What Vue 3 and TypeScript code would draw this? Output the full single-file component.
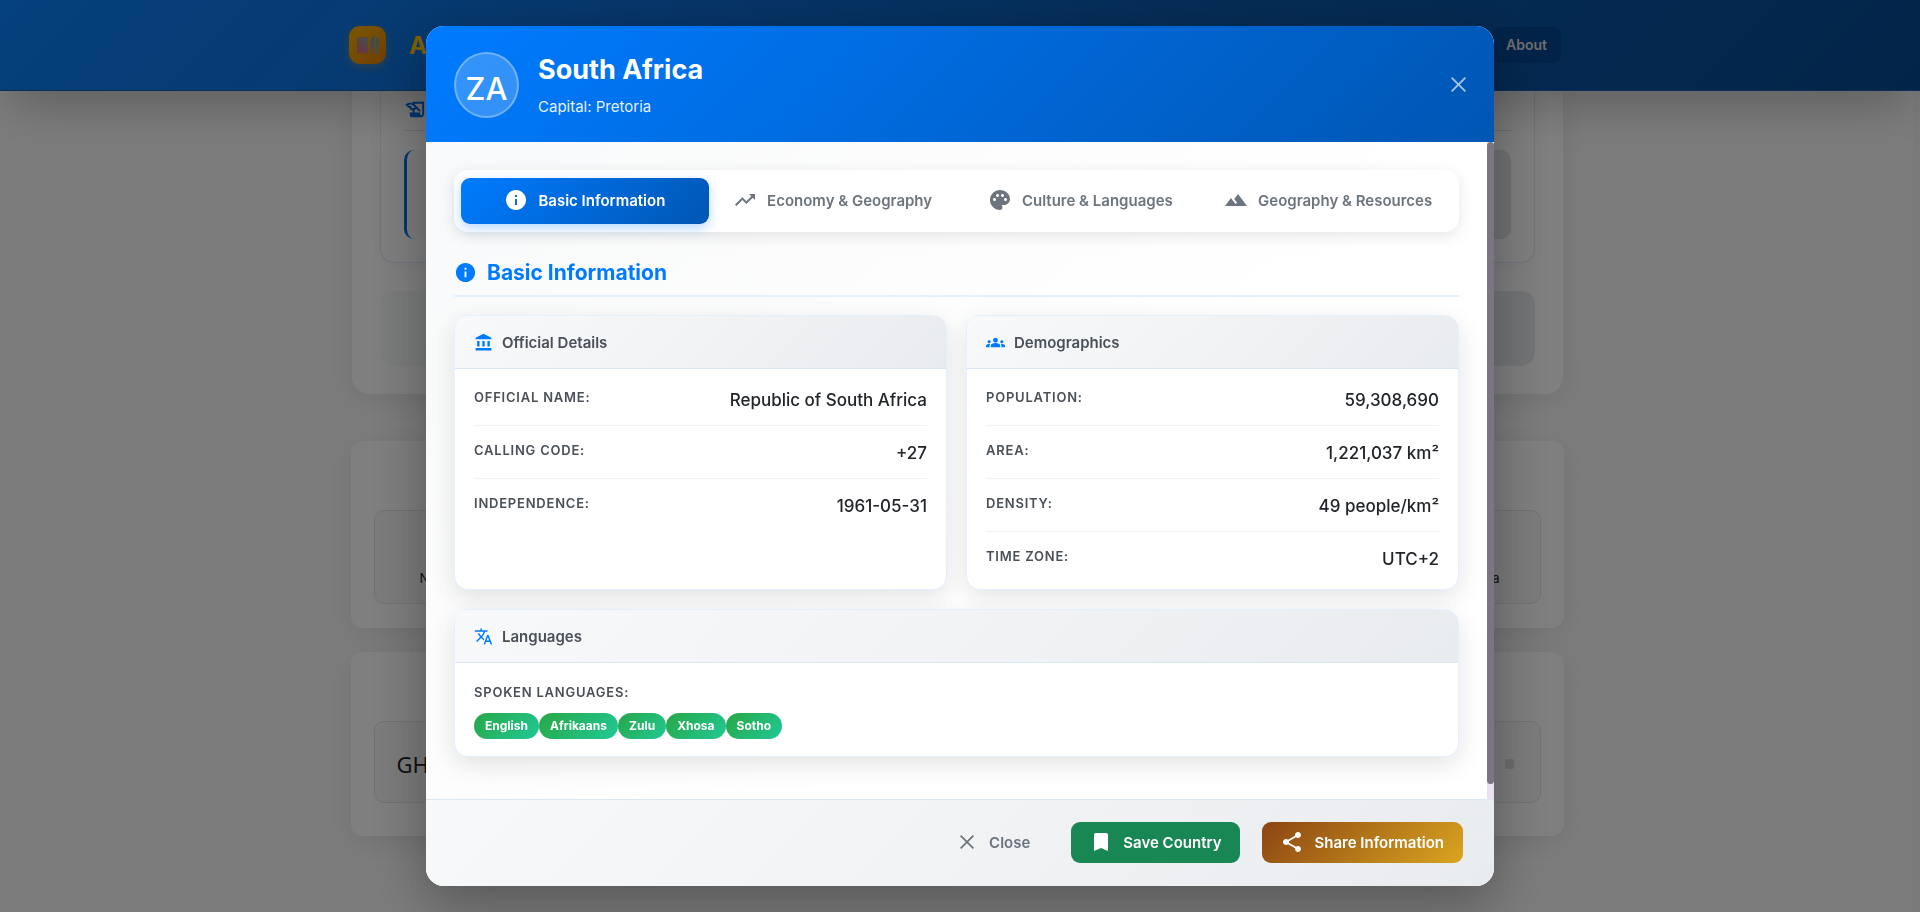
<script setup lang="ts">
import { ref } from 'vue'

interface Tab { id: string; label: string; icon: string }
interface Fact { label: string; value: string }
interface Panel { title: string; icon: string; facts: Fact[] }

const icons: Record<string, string> = {
  info: 'M12 2C6.48 2 2 6.48 2 12s4.48 10 10 10 10-4.48 10-10S17.52 2 12 2zm1 15h-2v-6h2v6zm0-8h-2V7h2v2z',
  trend: 'M16 6l2.29 2.29-4.88 4.88-4-4L2 16.59 3.41 18l6-6 4 4 6.3-6.29L22 12V6z',
  palette: 'M12 2C6.49 2 2 6.49 2 12s4.49 10 10 10c1.38 0 2.5-1.12 2.5-2.5 0-.61-.23-1.2-.64-1.67-.08-.1-.13-.21-.13-.33 0-.28.22-.5.5-.5H16c3.31 0 6-2.69 6-6 0-4.96-4.49-9-10-9zm5.5 11c-.83 0-1.5-.67-1.5-1.5s.67-1.5 1.5-1.5 1.5.67 1.5 1.5-.67 1.5-1.5 1.5zm-3-4c-.83 0-1.5-.67-1.5-1.5S13.67 6 14.5 6s1.5.67 1.5 1.5S15.33 9 14.5 9zM5 11.5c0-.83.67-1.5 1.5-1.5s1.5.67 1.5 1.5S7.33 13 6.5 13 5 12.33 5 11.5zm6-4c0 .83-.67 1.5-1.5 1.5S8 8.33 8 7.5 8.67 6 9.5 6s1.5.67 1.5 1.5z',
  terrain: 'M14 6l-3.75 5 2.85 3.8-1.6 1.2C9.81 13.75 7 10 7 10l-6 8h22L14 6z',
  bank: 'M4 10h3v7H4zM10.500 10h3v7h-3zM2 19h20v3H2zM17 10h3v7h-3zM12 1L2 6v2h20V6z',
  groups: 'M12 12.750c1.630 0 3.070.390 4.240.900 1.080.480 1.760 1.560 1.760 2.730V18H6v-1.610c0-1.180.680-2.260 1.760-2.730 1.170-.520 2.610-.910 4.240-.910zM4 13c1.100 0 2-.900 2-2s-.900-2-2-2-2 .900-2 2 .900 2 2 2zm1.130 1.100c-.370-.060-.740-.100-1.130-.100-.990 0-1.930.210-2.780.580C.480 14.900 0 15.620 0 16.430V18h4.500v-1.610c0-.830.230-1.610.630-2.290zM20 13c1.100 0 2-.900 2-2s-.900-2-2-2-2 .900-2 2 .900 2 2 2zm4 3.430c0-.810-.480-1.530-1.220-1.850-.850-.370-1.790-.580-2.780-.580-.390 0-.760.040-1.130.100.400.680.630 1.460.630 2.290V18H24v-1.570zM12 6c1.660 0 3 1.340 3 3s-1.340 3-3 3-3-1.340-3-3 1.340-3 3-3z',
  translate: 'M12.870 15.070l-2.540-2.510.030-.030c1.740-1.940 2.980-4.170 3.710-6.530H17V4h-7V2H8v2H1v1.990h11.170C11.500 7.920 10.440 9.750 9 11.350 8.070 10.320 7.300 9.190 6.690 8h-2c.730 1.630 1.730 3.170 2.980 4.560l-5.090 5.020L4 19l5-5 3.110 3.110.760-2.040zM18.500 10h-2L12 22h2l1.120-3h4.750L21 22h2l-4.500-12zm-2.620 7l1.620-4.330L19.120 17h-3.240z',
  close: 'M19 6.200L17.800 5 12 10.800 6.200 5 5 6.200 10.800 12 5 17.800 6.200 19 12 13.200 17.800 19 19 17.800 13.200 12z',
  bookmark: 'M17 3H7c-1.100 0-2 .900-2 2v16l7-3 7 3V5c0-1.100-.900-2-2-2z',
  share: 'M18 16.080c-.760 0-1.440.300-1.960.770L8.910 12.700c.050-.230.090-.460.090-.700s-.040-.470-.090-.700l7.050-4.110c.540.500 1.250.810 2.040.810 1.660 0 3-1.340 3-3s-1.340-3-3-3-3 1.340-3 3c0 .240.040.470.090.700L8.040 9.810C7.500 9.310 6.790 9 6 9c-1.660 0-3 1.340-3 3s1.340 3 3 3c.790 0 1.500-.310 2.040-.810l7.120 4.160c-.050.210-.080.430-.080.650 0 1.610 1.310 2.920 2.920 2.920s2.920-1.310 2.920-2.920-1.310-2.920-2.920-2.920z',
  history: 'M9 4v1.380c-.83-.33-1.720-.5-2.610-.5-1.790 0-3.580.68-4.950 2.050l3.330 3.330h1.110v1.110c.86.86 1.980 1.310 3.110 1.360V15H6v3c0 1.100.900 2 2 2h10c1.660 0 3-1.340 3-3V4H9zm-1.110 6.410V8.260H5.610L4.570 7.220a5.070 5.070 0 0 1 1.820-.34c1.340 0 2.590.52 3.540 1.460l1.410 1.410-.2.2a2.700 2.700 0 0 1-1.920.8c-.47 0-.93-.12-1.330-.34zM19 17c0 .55-.45 1-1 1s-1-.45-1-1v-2h-6v-2.590c.57-.23 1.100-.57 1.560-1.030l.2-.2L15.590 14H17v-1.410l-6-5.970V6h8v11z',
}

const tabs: Tab[] = [
  { id: 'basic', label: 'Basic Information', icon: 'info' },
  { id: 'economy', label: 'Economy & Geography', icon: 'trend' },
  { id: 'culture', label: 'Culture & Languages', icon: 'palette' },
  { id: 'resources', label: 'Geography & Resources', icon: 'terrain' },
]
const active = ref('basic')

const panels: Panel[] = [
  {
    title: 'Official Details',
    icon: 'bank',
    facts: [
      { label: 'Official Name:', value: 'Republic of South Africa' },
      { label: 'Calling Code:', value: '+27' },
      { label: 'Independence:', value: '1961-05-31' },
    ],
  },
  {
    title: 'Demographics',
    icon: 'groups',
    facts: [
      { label: 'Population:', value: '59,308,690' },
      { label: 'Area:', value: '1,221,037 km²' },
      { label: 'Density:', value: '49 people/km²' },
      { label: 'Time Zone:', value: 'UTC+2' },
    ],
  },
]
const languages = ['English', 'Afrikaans', 'Zulu', 'Xhosa', 'Sotho']
</script>

<template>
  <div class="page">
    <header class="site-header">
      <div class="site-bar">
        <span class="logo">
          <svg viewBox="0 0 24 24" width="24" height="24" aria-hidden="true">
            <defs>
              <linearGradient id="book" x1="0" y1="1" x2="1" y2="0">
                <stop offset="0" stop-color="#e06080" />
                <stop offset="0.5" stop-color="#a09090" />
                <stop offset="1" stop-color="#50a0a0" />
              </linearGradient>
            </defs>
            <path fill="url(#book)" d="M1 5c4-1.500 8-1.500 11 .5v16c-3-2-7-2-11-.5zM14 8l5-7v14l-5 4zM20 5l3 .5V21c-3-1-7-1-10 .5 2-2 4-3 7-3z" />
          </svg>
        </span>
        <strong class="brand">Africa</strong>
        <a class="nav-link" href="#about">About</a>
      </div>
    </header>

    <main class="content">
      <section class="sheet story">
        <div class="story-card">
          <h2 class="story-head">
            <svg viewBox="0 0 24 24" width="23" height="23" aria-hidden="true"><path :d="icons.history" /></svg>
          </h2>
          <p class="quote">South Africa<br />government</p>
        </div>
        <div class="strip"></div>
      </section>
      <section class="sheet">
        <div class="tile tall"><span>Nigeria</span><span>Kenya</span></div>
      </section>
      <section class="sheet last">
        <div class="tile flags"><span>GH</span><i class="mark"></i></div>
      </section>
    </main>
    <div class="page-gutter"></div>

    <div class="overlay">
      <div class="dialog" role="dialog" aria-modal="true" aria-labelledby="dialog-title">
        <header class="dialog-head">
          <span class="avatar">ZA</span>
          <div class="heading">
            <h1 id="dialog-title">South Africa</h1>
            <p>Capital: Pretoria</p>
          </div>
          <button class="dismiss" type="button" aria-label="Close dialog">
            <svg viewBox="5 5 14 14" width="15" height="15" aria-hidden="true"><path :d="icons.close" /></svg>
          </button>
        </header>

        <div class="dialog-body">
          <div class="scroll">
            <div class="tabs" role="tablist">
              <button
                v-for="tab in tabs"
                :key="tab.id"
                type="button"
                role="tab"
                :aria-selected="active === tab.id"
                :class="['tab', { on: active === tab.id }]"
                @click="active = tab.id"
              >
                <svg viewBox="0 0 24 24" width="24" height="24" aria-hidden="true"><path :d="icons[tab.icon]" /></svg>
                {{ tab.label }}
              </button>
            </div>

            <h2 class="section-title">
              <svg viewBox="0 0 24 24" width="23" height="23" aria-hidden="true"><path :d="icons.info" /></svg>
              Basic Information
            </h2>

            <div class="cards">
              <section v-for="panel in panels" :key="panel.title" class="card">
                <h3 class="card-head">
                  <svg viewBox="0 0 24 24" width="19" height="19" aria-hidden="true"><path :d="icons[panel.icon]" /></svg>
                  {{ panel.title }}
                </h3>
                <dl class="facts">
                  <div v-for="fact in panel.facts" :key="fact.label" class="fact">
                    <dt>{{ fact.label }}</dt>
                    <dd>{{ fact.value }}</dd>
                  </div>
                </dl>
              </section>

              <section class="card wide">
                <h3 class="card-head">
                  <svg viewBox="0 0 24 24" width="19" height="19" aria-hidden="true"><path :d="icons.translate" /></svg>
                  Languages
                </h3>
                <div class="spoken">
                  <h4>Spoken Languages:</h4>
                  <ul class="pills">
                    <li v-for="lang in languages" :key="lang">{{ lang }}</li>
                  </ul>
                </div>
              </section>
            </div>
          </div>
          <div class="track"><div class="thumb"></div></div>
        </div>

        <footer class="dialog-foot">
          <button class="btn plain" type="button">
            <svg viewBox="0 0 24 24" width="24" height="24" aria-hidden="true"><path :d="icons.close" /></svg>
            Close
          </button>
          <button class="btn save" type="button">
            <svg viewBox="0 0 24 24" width="24" height="24" aria-hidden="true"><path :d="icons.bookmark" /></svg>
            Save Country
          </button>
          <button class="btn share" type="button">
            <svg viewBox="0 0 24 24" width="24" height="24" aria-hidden="true"><path :d="icons.share" /></svg>
            Share Information
          </button>
        </footer>
      </div>
    </div>
  </div>
</template>

<style>
body {
  background: #f9f9f9;
}
</style>

<style scoped>
.page {
  position: relative;
  height: 100vh;
  overflow: hidden;
  font-family: Inter, "Liberation Sans", sans-serif;
  color: #212529;
  background: #f9f9f9;
}
.page *,
.page *::before {
  box-sizing: border-box;
}
svg {
  display: block;
  flex: none;
  fill: currentColor;
}
h1, h2, h3, h4, p, ul, dl, dd {
  margin: 0;
}
button {
  font-family: inherit;
  border: 0;
  background: none;
  cursor: pointer;
}

/* Site behind the dialog */
.site-header {
  position: relative;
  z-index: 1;
  height: 91px;
  padding-right: 10px;
  border-bottom: 1px solid #1a5fae;
  background: linear-gradient(135deg, #0a82fa 0%, #0d70dc 28%, #0b5aae 60%, #064992 100%);
  box-shadow: 0 24px 48px -12px rgba(0, 0, 0, 0.25);
}
.site-bar {
  display: flex;
  align-items: center;
  max-width: 1212px;
  height: 90px;
  margin: 0 auto;
}
.logo {
  display: grid;
  place-items: center;
  width: 37px;
  height: 38px;
  border-radius: 11px;
  background: linear-gradient(135deg, #f4b000, #e07c00);
  box-shadow: 0 3px 10px rgba(255, 170, 0, 0.3);
}
.brand {
  margin-left: 23px;
  color: #ffc107;
  font-size: 24px;
}
.nav-link {
  margin-left: auto;
  padding: 9px 14px;
  border-radius: 8px;
  background: rgba(0, 50, 120, 0.35);
  color: #dcdcdc;
  font-size: 14px;
  line-height: 18px;
  font-weight: 600;
  text-decoration: none;
}
.content {
  max-width: 1213px;
  margin: 0 auto;
  padding: 0;
  translate: -3px 0;
}
.sheet {
  padding: 69px 23px 24px;
  border-radius: 12px;
  background: #fff;
  box-shadow: 0 6px 28px rgba(0, 15, 10, 0.09);
  margin-bottom: 24px;
}
.story {
  padding: 0 28px 28px;
  border: 1px solid #e6f1fc;
  border-top: 0;
  border-radius: 0 0 18px 18px;
  margin-bottom: 46px;
}
.story-card {
  padding: 0 23px 23px;
  border: 1px solid #dceafa;
  border-top: 0;
  border-radius: 0 0 14px 14px;
  box-shadow: 0 4px 16px rgba(0, 0, 0, 0.04);
}
.story-head {
  height: 40px;
  padding-top: 7px;
  border-bottom: 1px solid #d4e6fa;
  color: #0070ee;
}
.quote {
  height: 89px;
  margin-top: 19px;
  padding: 18px 20px;
  border-left: 3px solid #0070e8;
  border-radius: 10px;
  background: linear-gradient(90deg, #f8f9fa, #e2e5e8);
  color: #7a3d12;
  font-size: 16px;
  line-height: 27px;
}
.strip {
  height: 75px;
  margin-top: 28px;
  border-radius: 14px;
  background: linear-gradient(90deg, #f6f8f9, #e6e9ec);
}
.tile {
  display: flex;
  justify-content: space-between;
  height: 94px;
  padding: 0 40px 0 45px;
  border: 1px solid #e4e5e6;
  border-radius: 10px;
  background: #f9f9f9;
  font-size: 13px;
}
.tall {
  padding-top: 59px;
}
.flags {
  height: 82px;
  align-items: center;
  padding: 4px 26px 0 22px;
  font-family: "Noto Sans", sans-serif;
  font-size: 22px;
}
.last {
  padding-bottom: 33px;
}
.mark {
  width: 9px;
  height: 10px;
  border-radius: 2px;
  background: #dadbdb;
}
.page-gutter {
  position: absolute;
  top: 91px;
  right: 0;
  bottom: 0;
  width: 7px;
  background: #f7f2f8;
}

/* Dialog */
.overlay {
  position: fixed;
  inset: 0;
  z-index: 2;
  display: grid;
  place-items: center;
  padding: 26px 0;
  background: rgba(0, 0, 0, 0.5);
}
.dialog {
  display: flex;
  flex-direction: column;
  width: 1068px;
  max-width: 94vw;
  height: 100%;
  max-height: calc(100vh - 52px);
  border-radius: 18px;
  overflow: hidden;
  background: #fff;
  box-shadow: 0 16px 56px rgba(0, 0, 0, 0.33);
}
.dialog-head {
  display: flex;
  align-items: center;
  padding: 25px 28px 24px;
  background: linear-gradient(135deg, #007bff, #0056b3);
  color: #fff;
}
.avatar {
  display: grid;
  place-items: center;
  width: 65px;
  height: 66px;
  padding-top: 8px;
  border: 2px solid rgba(255, 255, 255, 0.3);
  border-radius: 50%;
  background: rgba(255, 255, 255, 0.2);
  font-size: 31px;
  line-height: 30px;
  font-weight: 500;
}
.heading {
  flex: 1;
  margin-left: 19px;
  padding-top: 2px;
}
.heading h1 {
  font-size: 27px;
  line-height: 34px;
  font-weight: 700;
}
.heading p {
  margin-top: 9px;
  color: rgba(255, 255, 255, 0.92);
  font-size: 15px;
  line-height: 22px;
}
.dismiss {
  padding: 0;
  color: rgba(255, 255, 255, 0.65);
}
.dialog-body {
  display: grid;
  grid-template-columns: minmax(0, 1fr) 7px;
  flex: 1;
  min-height: 0;
  background: linear-gradient(135deg, #f8f9fa, #fff 60%);
}
.scroll {
  overflow: hidden;
  padding: 28px;
}
.track {
  background: #e8e0ec;
}
.thumb {
  height: 642px;
  max-height: 98%;
  border-radius: 4px;
  background: #7b7582;
}
.tabs {
  display: grid;
  grid-template-columns: repeat(4, minmax(0, 1fr));
  padding: 8px 7px;
  border-radius: 14px;
  background: #fff;
  box-shadow: 0 4px 16px rgba(0, 0, 0, 0.1);
}
.tab {
  display: flex;
  align-items: center;
  justify-content: center;
  gap: 10px;
  height: 46px;
  padding: 0 0 2px;
  border-radius: 9px;
  color: #6c757d;
  font-size: 15px;
  font-weight: 600;
  white-space: nowrap;
}
.tab.on {
  background: linear-gradient(135deg, #007bff, #0056b3);
  color: #fff;
  box-shadow: 0 4px 12px rgba(0, 123, 255, 0.3);
}
.section-title {
  display: flex;
  align-items: center;
  gap: 10px;
  height: 65px;
  padding-top: 17px;
  margin-bottom: 18px;
  border-bottom: 2px solid #e3f0ff;
  color: #007bff;
  font-size: 21px;
  font-weight: 700;
}
.cards {
  display: grid;
  grid-template-columns: repeat(2, minmax(0, 1fr));
  gap: 19px;
}
.card {
  border: 1px solid #e3f0ff;
  border-radius: 14px;
  overflow: hidden;
  background: #fff;
  box-shadow: 0 8px 26px rgba(0, 0, 0, 0.11);
}
.wide {
  grid-column: 1 / -1;
}
.card-head {
  display: flex;
  align-items: center;
  gap: 9px;
  height: 53px;
  padding: 0 19px;
  border-bottom: 1px solid #d9e6f5;
  background: linear-gradient(135deg, #f8f9fa, #e9ecef);
  color: #495057;
  font-size: 15px;
  font-weight: 600;
}
.card-head svg {
  color: #007bff;
}
.facts {
  padding: 4px 19px;
}
.fact {
  display: flex;
  justify-content: space-between;
  height: 53px;
  padding-top: 13px;
  border-bottom: 1px solid #f1f2f4;
}
.fact:last-child {
  border-bottom-color: transparent;
}
.fact dt,
.spoken h4 {
  color: #495057;
  font-size: 13px;
  line-height: 23px;
  font-weight: 600;
  text-transform: uppercase;
  letter-spacing: 0.06em;
}
.fact dd {
  font-size: 17px;
  line-height: 28px;
  font-weight: 500;
}
.spoken {
  padding: 18px 19px 17px;
}
.pills {
  display: flex;
  margin-top: 9px;
  padding: 0;
  list-style: none;
}
.pills li {
  padding: 0 11px;
  border-radius: 13px;
  background: linear-gradient(135deg, #28a745, #20c997);
  color: #fff;
  font-size: 12px;
  line-height: 26px;
  font-weight: 700;
}
.dialog-foot {
  display: flex;
  align-items: center;
  justify-content: flex-end;
  gap: 22px;
  height: 87px;
  padding: 0 31px 2px;
  border-top: 1px solid #dbe7f4;
  background: linear-gradient(135deg, #f8f9fa, #e9ecef);
}
.btn {
  display: flex;
  align-items: center;
  gap: 10px;
  height: 41px;
  padding: 0 19px 0 18px;
  border-radius: 9px;
  color: #fff;
  font-size: 15px;
  font-weight: 600;
  white-space: nowrap;
}
.btn.plain {
  color: #6c757d;
}
.btn.save {
  background: #198754;
}
.btn.share {
  background: linear-gradient(135deg, #8b4513, #daa520);
}
</style>
